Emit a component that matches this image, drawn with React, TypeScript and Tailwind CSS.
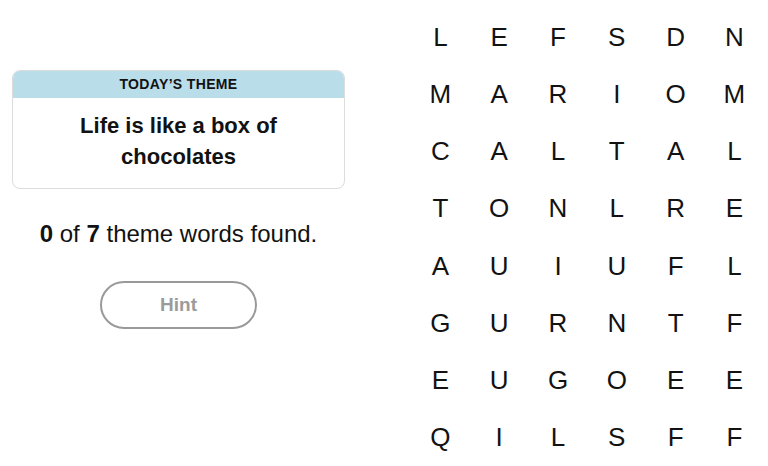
const rows = [
  ['L', 'E', 'F', 'S', 'D', 'N'],
  ['M', 'A', 'R', 'I', 'O', 'M'],
  ['C', 'A', 'L', 'T', 'A', 'L'],
  ['T', 'O', 'N', 'L', 'R', 'E'],
  ['A', 'U', 'I', 'U', 'F', 'L'],
  ['G', 'U', 'R', 'N', 'T', 'F'],
  ['E', 'U', 'G', 'O', 'E', 'E'],
  ['Q', 'I', 'L', 'S', 'F', 'F'],
];

export default function App() {
  return (
    <div
      className="flex h-[466px] w-[768px] overflow-hidden bg-white text-[#121212]"
      style={{ fontFamily: '"Liberation Sans", Arial, sans-serif' }}
    >
      <div className="flex w-[357px] flex-col items-center px-3 pt-[70px]">
        <div className="w-full overflow-hidden rounded-lg border border-[#dcdcdc]">
          <div className="flex h-[27px] items-center justify-center bg-[#b9dde9] text-[14px] font-bold tracking-wide text-[#121212]">
            TODAY’S THEME
          </div>
          <div className="px-4 pb-[16px] pt-[12px] text-center text-[22px] font-bold leading-[31px]">
            Life is like a box of
            <br />
            chocolates
          </div>
        </div>
        <p className="mt-[30px] text-[24px] leading-[30px]">
          <b>0</b> of <b>7</b> theme words found.
        </p>
        <button
          type="button"
          className="mt-[32px] h-[48px] w-[157px] rounded-full border-2 border-[#999] text-[19px] font-bold text-[#9b9b9b]"
        >
          Hint
        </button>
      </div>
      <div className="ml-[54px] mt-[9px] grid grid-cols-6">
        {rows.flat().map((ch, i) => (
          <div
            key={i}
            className="flex h-[57px] w-[58.8px] items-center justify-center text-[26px]"
          >
            {ch}
          </div>
        ))}
      </div>
    </div>
  );
}
